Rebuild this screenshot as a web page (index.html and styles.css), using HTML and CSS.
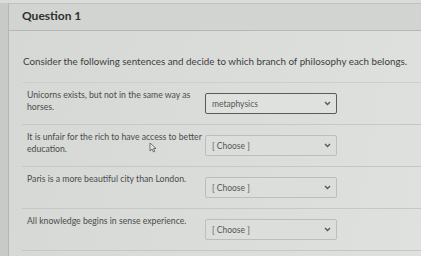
FILE: index.html
```html
<!DOCTYPE html>
<html lang="en">
    <head>
        <meta charset="UTF-8">
        <meta name="viewport" content="width=device-width, initial-scale=1.0">
        <title>Question 1</title>
        <link rel="stylesheet" href="styles.css">
    </head>
    <body>
        <div class="page">
            <div class="gutter"></div>
            <div class="card">
                <div class="header">Question 1</div>
                <div class="question">
                    <p class="prompt">Consider the following sentences and decide to which branch of philosophy each belongs.</p>

                    <div class="answers">
                        <div class="row">
                            <div class="text">Unicorns exists, but not in the same way as horses.</div>
                            <div class="select focused">
                                <span>metaphysics</span>
                                <svg class="chev" width="7" height="5" viewBox="0 0 7 5"><path d="M1 1 L3.5 3.5 L6 1" fill="none" stroke="#555" stroke-width="1.3"/></svg>
                            </div>
                        </div>
                        <div class="row">
                            <div class="text">It is unfair for the rich to have access to better education.</div>
                            <div class="select">
                                <span>[ Choose ]</span>
                                <svg class="chev" width="7" height="5" viewBox="0 0 7 5"><path d="M1 1 L3.5 3.5 L6 1" fill="none" stroke="#555" stroke-width="1.3"/></svg>
                            </div>
                            <!--mouse pointer-->
                            <svg class="cursor" width="8" height="11" viewBox="0 0 8 11"><path d="M1 1 L1 9 L3 7 L4.5 10 L5.8 9.4 L4.4 6.5 L7 6.5 Z" fill="#e8e8e6" stroke="#555" stroke-width="0.8"/></svg>
                        </div>
                        <div class="row">
                            <div class="text">Paris is a more beautiful city than London.</div>
                            <div class="select">
                                <span>[ Choose ]</span>
                                <svg class="chev" width="7" height="5" viewBox="0 0 7 5"><path d="M1 1 L3.5 3.5 L6 1" fill="none" stroke="#555" stroke-width="1.3"/></svg>
                            </div>
                        </div>
                        <div class="row">
                            <div class="text">All knowledge begins in sense experience.</div>
                            <div class="select">
                                <span>[ Choose ]</span>
                                <svg class="chev" width="7" height="5" viewBox="0 0 7 5"><path d="M1 1 L3.5 3.5 L6 1" fill="none" stroke="#555" stroke-width="1.3"/></svg>
                            </div>
                        </div>
                    </div>
                </div>
            </div>
        </div>
    </body>
</html>
```

FILE: styles.css
```css
body{
    margin: 0;
    background: #d5d7d4;
    font-family: Lato, "Open Sans", sans-serif;
    overflow: hidden;
}
.page{
    display: flex;
    height: 256px;
    padding-top: 3px;
    box-sizing: border-box;
    background: linear-gradient(180deg, #dadcd9 0%, #d6d8d5 60%, #cfd1ce 100%);
}
.gutter{
    width: 8px;
    background: #c8cac7;
    border-right: 1px solid #b4b6b3;
}
.card{
    flex: 1;
    border-top: 1px solid #c0c2bf;
    background: linear-gradient(100deg, #d6d8d5 0%, #dcdedb 70%, #dfe1de 100%);
}
.header{
    height: 26px;
    line-height: 24px;
    padding-left: 13px;
    font-size: 12px;
    font-weight: bold;
    color: #2e302f;
    background: #d2d4d1;
    border-bottom: 1px solid #b6b8b5;
}
.question{
    padding-left: 13px;
}
.prompt{
    margin: 0;
    padding: 24px 0 15px 1px;
    font-size: 9.8px;
    line-height: 12px;
    color: #3c3e3d;
    white-space: nowrap;
}
.answers{
    border-top: 1px solid #cdcfcc;
}
.row{
    position: relative;
    display: flex;
    align-items: flex-start;
    height: 41px;
    padding-left: 5px;
    border-bottom: 1px solid #c6c8c5;
}
.text{
    width: 178px;
    padding-top: 6px;
    font-size: 8.7px;
    line-height: 12px;
    color: #4a4c4b;
}
.select{
    display: flex;
    align-items: center;
    justify-content: space-between;
    width: 132px;
    height: 21px;
    margin-top: 10px;
    padding: 0 5px 0 6px;
    box-sizing: border-box;
    border: 1px solid #bcbebb;
    border-radius: 2px;
    background: #dcdedb;
    font-size: 8.5px;
    color: #555756;
}
.select.focused{
    border: 1.5px solid #5a5c5b;
    background: #dfe1de;
}
.chev{
    display: block;
}
.cursor{
    position: absolute;
    left: 127px;
    top: 17px;
}
```
